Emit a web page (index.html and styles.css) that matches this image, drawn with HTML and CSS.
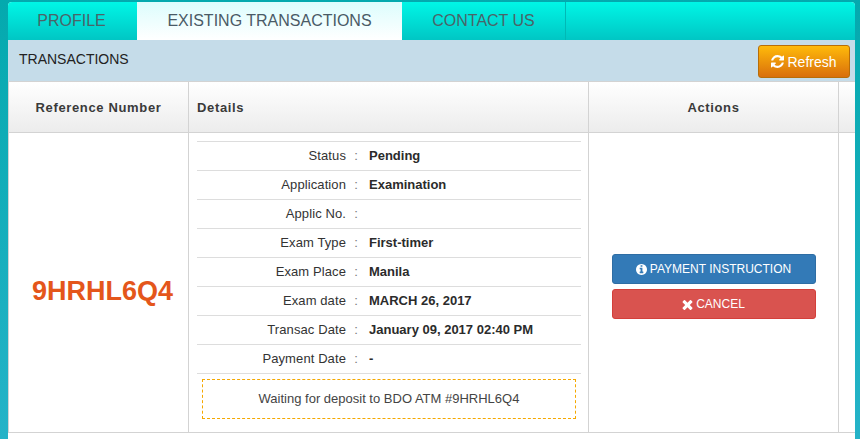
FILE: index.html
```html
<!DOCTYPE html>
<html lang="en">
<head>
<meta charset="utf-8">
<title>Transactions</title>
<link rel="stylesheet" href="styles.css">
</head>
<body>
<div class="panel">
  <nav class="tabs">
    <a class="tab tab-profile">PROFILE</a>
    <a class="tab tab-existing active">EXISTING TRANSACTIONS</a>
    <a class="tab tab-contact">CONTACT US</a>
  </nav>
  <div class="band">
    <span class="band-title">TRANSACTIONS</span>
    <button class="btn btn-refresh">
      <svg class="icon icon-refresh" viewBox="128 128 1536 1536"><path d="M1639 1056q0 5-1 7-64 268-268 434.500t-478 166.500q-146 0-282.500-55t-243.500-157l-129 129q-19 19-45 19t-45-19-19-45v-448q0-26 19-45t45-19h448q26 0 45 19t19 45-19 45l-137 137q71 66 161 102t187 36q134 0 250-65t186-179q11-17 53-117 8-23 30-23h192q13 0 22.500 9.500t9.500 22.500zm25-800v448q0 26-19 45t-45 19h-448q-26 0-45-19t-19-45 19-45l138-138q-148-137-349-137-134 0-250 65t-186 179q-11 17-53 117-8 23-30 23h-199q-13 0-22.500-9.500t-9.500-22.500v-7q65-268 270-434.500t480-166.500q146 0 284 55.500t245 156.500l130-129q19-19 45-19t45 19 19 45z"/></svg>
      Refresh
    </button>
  </div>
  <div class="grid head">
    <div class="cell th center">Reference Number</div>
    <div class="cell th">Details</div>
    <div class="cell th center">Actions</div>
    <div class="cell th last"></div>
  </div>
  <div class="grid body-row">
    <div class="cell ref">9HRHL6Q4</div>
    <div class="cell details">
      <div class="rows">
        <div class="row"><span class="k">Status</span><span class="c">:</span><b class="v">Pending</b></div>
        <div class="row"><span class="k">Application</span><span class="c">:</span><b class="v">Examination</b></div>
        <div class="row"><span class="k">Applic No.</span><span class="c">:</span><b class="v"></b></div>
        <div class="row"><span class="k">Exam Type</span><span class="c">:</span><b class="v">First-timer</b></div>
        <div class="row"><span class="k">Exam Place</span><span class="c">:</span><b class="v">Manila</b></div>
        <div class="row"><span class="k">Exam date</span><span class="c">:</span><b class="v">MARCH 26, 2017</b></div>
        <div class="row"><span class="k">Transac Date</span><span class="c">:</span><b class="v">January 09, 2017 02:40 PM</b></div>
        <div class="row"><span class="k">Payment Date</span><span class="c">:</span><b class="v">-</b></div>
      </div>
      <div class="notice">Waiting for deposit to BDO ATM #9HRHL6Q4</div>
    </div>
    <div class="cell actions">
      <button class="btn btn-action btn-primary">
        <svg class="icon icon-sm" viewBox="128 128 1536 1536"><path d="M1152 1376v-160q0-14-9-23t-23-9h-96v-512q0-14-9-23t-23-9h-320q-14 0-23 9t-9 23v160q0 14 9 23t23 9h96v320h-96q-14 0-23 9t-9 23v160q0 14 9 23t23 9h448q14 0 23-9t9-23zm-128-896v-160q0-14-9-23t-23-9h-192q-14 0-23 9t-9 23v160q0 14 9 23t23 9h192q14 0 23-9t9-23zm640 416q0 209-103 385.500t-279.500 279.500-385.500 103-385.500-103-279.500-279.500-103-385.500 103-385.500 279.500-279.500 385.500-103 385.500 103 279.500 279.500 103 385.500z"/></svg>
        PAYMENT INSTRUCTION
      </button>
      <button class="btn btn-action btn-danger">
        <svg class="icon icon-sm" viewBox="240 240 1312 1312"><path d="M1490 1322q0 40-28 68l-136 136q-28 28-68 28t-68-28l-294-294-294 294q-28 28-68 28t-68-28l-136-136q-28-28-28-68t28-68l294-294-294-294q-28-28-28-68t28-68l136-136q28-28 68-28t68 28l294 294 294-294q28-28 68-28t68 28l136 136q28 28 28 68t-28 68l-294 294 294 294q28 28 28 68z"/></svg>
        CANCEL
      </button>
    </div>
    <div class="cell last"></div>
  </div>
</div>
</body>
</html>
```
FILE: styles.css
```css
* { box-sizing: border-box; }
html, body { margin: 0; height: 100%; overflow: hidden; }
body {
  padding: 2px 5px 0 8px;
  background: linear-gradient(180deg, #04a9ae 0%, #25b3c8 100%);
  font-family: "Liberation Sans", Arial, sans-serif;
  font-size: 13px;
  color: #333;
}
.panel {
  background: #fff;
  border-radius: 4px 4px 0 0;
  height: 437px;
  overflow: hidden;
}
.tabs {
  display: flex;
  height: 38px;
  background: linear-gradient(180deg, #00f6e6 0%, #00c6c4 100%);
}
.tab {
  display: flex;
  align-items: center;
  justify-content: center;
  font-size: 16px;
  color: #4a6468;
  padding-bottom: 1px;
}
.tab-profile { width: 129px; padding-right: 2px; }
.tab-existing { width: 265px; }
.tab-contact { width: 164px; border-right: 1px solid #00b9b5; }
.tab.active {
  background: linear-gradient(180deg, #dcfdfd 0%, #fff 100%);
  color: #4a5a66;
}
.band {
  display: flex;
  align-items: flex-start;
  justify-content: space-between;
  height: 42px;
  padding: 5px 5px 0 11px;
  background: #c5dce9;
  border-bottom: 1px solid #d3d3d3;
}
.band-title { font-size: 14px; color: #222; margin-top: 6px; }
.btn {
  display: flex;
  align-items: center;
  justify-content: center;
  font-family: inherit;
  color: #fff;
  border-radius: 3px;
  padding: 0;
}
.btn-refresh {
  width: 92px;
  height: 33px;
  gap: 3px;
  font-size: 14px;
  background: linear-gradient(180deg, #ffba0a 0%, #d96f0c 100%);
  border: 1px solid #b86e08;
}
.icon { fill: currentColor; }
.icon-refresh { width: 13px; height: 13px; }
.icon-sm { width: 11px; height: 11px; }
.grid {
  display: grid;
  grid-template-columns: 180px 400px 250px 16px;
  border-left: 1px solid #d3d3d3;
  border-bottom: 1px solid #d3d3d3;
}
.cell { border-right: 1px solid #d3d3d3; }
.cell.last { border-right: 0; }
.head {
  height: 51px;
  background: linear-gradient(180deg, #fff 0%, #ececec 100%);
}
.th {
  display: flex;
  align-items: center;
  padding-left: 8px;
  font-weight: bold;
  font-size: 13px;
  letter-spacing: 0.65px;
  color: #3a3a3a;
}
.th.center { justify-content: center; padding-left: 0; }
.body-row { height: 300px; }
.ref {
  display: flex;
  align-items: center;
  justify-content: center;
  padding: 18px 0 0 8px;
  font-size: 27px;
  font-weight: bold;
  color: #e4561b;
}
.details { padding: 8px 7px 0 8px; }
.rows { border-top: 1px solid #ddd; }
.row {
  display: flex;
  align-items: center;
  height: 29px;
  padding-bottom: 2px;
  border-bottom: 1px solid #ddd;
}
.k { width: 149px; text-align: right; color: #333; letter-spacing: 0.1px; }
.c { width: 20px; text-align: center; color: #777; }
.v { margin-left: 3px; color: #2b2b2b; }
.notice {
  display: flex;
  align-items: center;
  justify-content: center;
  height: 40px;
  margin: 5px 5px 0;
  padding-bottom: 2px;
  border: 1px dashed #f5a800;
  color: #444;
}
.actions {
  display: flex;
  flex-direction: column;
  align-items: center;
  justify-content: center;
  gap: 5px;
  padding-top: 8px;
}
.btn-action {
  width: 204px;
  height: 30px;
  gap: 3px;
  font-size: 12px;
}
.btn-primary { background: #337ab7; border: 1px solid #2e6da4; }
.btn-danger { background: #d9534f; border: 1px solid #d43f3a; }
```
